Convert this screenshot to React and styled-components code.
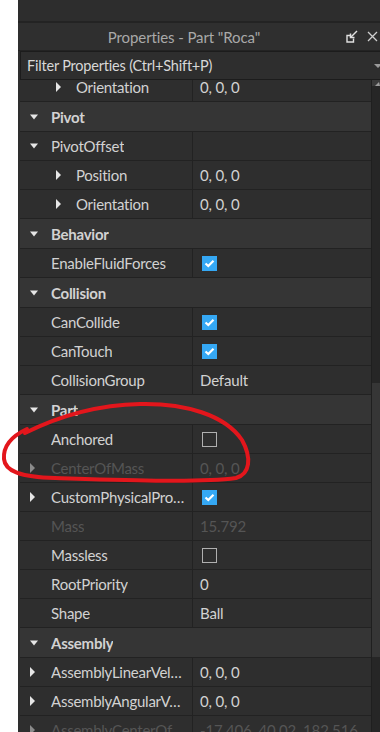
import React from 'react';
import styled, { createGlobalStyle } from 'styled-components';

const GlobalStyle = createGlobalStyle`
  html, body {
    margin: 0;
    padding: 0;
    background: #ffffff;
  }
  body {
    font-family: 'Lato', 'Liberation Sans', sans-serif;
  }
`;

const Screen = styled.div`
  position: relative;
  width: 380px;
  height: 732px;
  display: flex;
  overflow: hidden;
  background: #ffffff;
`;

const LeftGap = styled.div`
  width: 18px;
  flex-shrink: 0;
  background: #ffffff;
`;

const Panel = styled.div`
  flex: 1;
  display: flex;
  flex-direction: column;
  background: #2e2e2e;
  min-width: 0;
`;

const TopStrip = styled.div`
  height: 21px;
  background: #2d2d2d;
  border-bottom: 2px solid #232323;
  flex-shrink: 0;
`;

const TitleBar = styled.div`
  height: 27px;
  display: flex;
  align-items: center;
  background: #2f2f2f;
  border-bottom: 1px solid #232323;
  flex-shrink: 0;
`;

const Title = styled.div`
  flex: 1;
  text-align: center;
  padding-left: 4px;
  color: #a9a9a9;
  font-size: 15px;
  letter-spacing: -0.1px;
`;

const TitleIcons = styled.div`
  display: flex;
  align-items: center;
  gap: 9px;
  padding-right: 2px;
`;

const FilterBar = styled.div`
  height: 27px;
  margin-left: 2px;
  display: flex;
  align-items: center;
  justify-content: space-between;
  border: 1px solid #1c1c1c;
  border-right: none;
  background: #2e2e2e;
  padding-left: 6px;
  flex-shrink: 0;
`;

const FilterText = styled.span`
  color: #d8d8d8;
  font-size: 14.5px;
  letter-spacing: -0.2px;
`;

const DropArrow = styled.span`
  width: 0;
  height: 0;
  border-left: 4px solid transparent;
  border-right: 4px solid transparent;
  border-top: 4px solid #9a9a9a;
  margin-right: -2px;
`;

const Body = styled.div`
  flex: 1;
  display: flex;
  margin-left: 2px;
  min-height: 0;
`;

const List = styled.div`
  flex: 1;
  overflow: hidden;
  border-right: 1px solid #1f1f1f;
`;

const ListInner = styled.div`
  margin-top: -7px;
`;

const Scrollbar = styled.div`
  width: 8px;
  display: flex;
  flex-direction: column;
  background: #262626;
`;

const ScrollButton = styled.div`
  height: 16px;
  background: #3a3a3a;
  display: flex;
  align-items: flex-start;
  justify-content: flex-end;
  padding-top: 2px;
  box-sizing: border-box;
`;

const UpArrow = styled.span`
  width: 0;
  height: 0;
  border-left: 4px solid transparent;
  border-right: 1px solid transparent;
  border-bottom: 4px solid #9c9c9c;
`;

const Track = styled.div`
  height: ${(p) => p.$h}px;
  flex-shrink: 0;
  background: ${(p) => (p.$thumb ? '#363636' : '#262626')};
`;

const Row = styled.div`
  height: ${(p) => (p.$header ? 29 : 28)}px;
  display: flex;
  align-items: stretch;
  border-bottom: 1px solid #222222;
  background: ${(p) => (p.$header ? '#353535' : '#2e2e2e')};
`;

const NameCell = styled.div`
  width: 173px;
  flex-shrink: 0;
  display: flex;
  align-items: center;
  position: relative;
  padding-left: ${(p) => 31 + p.$indent * 25}px;
  padding-right: 7px;
  box-sizing: border-box;
  border-right: ${(p) => (p.$header ? 'none' : '1px solid #222222')};
  color: ${(p) => (p.$disabled ? '#555555' : '#d2d2d2')};
  font-size: 15px;
  font-weight: ${(p) => (p.$header ? 700 : 400)};
  letter-spacing: -0.25px;
  white-space: nowrap;
`;

const NameText = styled.span`
  overflow: hidden;
  text-overflow: ellipsis;
`;

const ValueCell = styled.div`
  flex: 1;
  display: flex;
  align-items: center;
  padding-left: 7px;
  color: ${(p) => (p.$disabled ? '#555555' : '#d2d2d2')};
  font-size: 15px;
  letter-spacing: -0.15px;
  white-space: nowrap;
`;

const Caret = styled.span`
  position: absolute;
  left: ${(p) => 10 + p.$indent * 26}px;
  top: 50%;
  width: 0;
  height: 0;
  transform: translateY(-50%);
  ${(p) =>
    p.$open
      ? `border-left: 4px solid transparent;
         border-right: 4px solid transparent;
         border-top: 5px solid #e6e6e6;`
      : `border-top: 5px solid transparent;
         border-bottom: 5px solid transparent;
         border-left: 5px solid ${p.$dim ? '#8a8a8a' : '#e6e6e6'};`}
`;

const Checkbox = styled.span`
  width: 15px;
  height: 15px;
  margin-left: 2px;
  box-sizing: border-box;
  display: flex;
  align-items: center;
  justify-content: center;
  background: ${(p) => (p.$checked ? '#35a8f4' : 'transparent')};
  border: ${(p) => (p.$checked ? 'none' : '1px solid #b0b0b0')};
`;

const Annotation = styled.svg`
  position: absolute;
  left: 0;
  top: 0;
  pointer-events: none;
`;

const rows = [
  { name: 'Orientation', indent: 1, caret: 'right', value: '0, 0, 0' },
  { header: true, name: 'Pivot' },
  { name: 'PivotOffset', caret: 'open', value: '' },
  { name: 'Position', indent: 1, caret: 'right', value: '0, 0, 0' },
  { name: 'Orientation', indent: 1, caret: 'right', value: '0, 0, 0' },
  { header: true, name: 'Behavior' },
  { name: 'EnableFluidForces', check: true },
  { header: true, name: 'Collision' },
  { name: 'CanCollide', check: true },
  { name: 'CanTouch', check: true },
  { name: 'CollisionGroup', value: 'Default' },
  { header: true, name: 'Part' },
  { name: 'Anchored', check: false },
  { name: 'CenterOfMass', caret: 'right', disabled: true, value: '0, 0, 0' },
  { name: 'CustomPhysicalProperties', caret: 'right', check: true },
  { name: 'Mass', disabled: true, value: '15.792' },
  { name: 'Massless', check: false },
  { name: 'RootPriority', value: '0' },
  { name: 'Shape', value: 'Ball' },
  { header: true, name: 'Assembly' },
  { name: 'AssemblyLinearVelocity', caret: 'right', value: '0, 0, 0' },
  { name: 'AssemblyAngularVelocity', caret: 'right', value: '0, 0, 0' },
  { name: 'AssemblyCenterOfMass', caret: 'right', disabled: true, value: '-17.406, 40.02, 182.516' },
];

const CheckMark = () => (
  <svg width="11" height="9" viewBox="0 0 11 9">
    <path d="M1.5 4.5 L4.3 7 L9.5 1.8" fill="none" stroke="#ffffff" strokeWidth="2.2" />
  </svg>
);

const UndockIcon = () => (
  <svg width="12" height="13" viewBox="0 0 12 13">
    <path d="M4.5 5.5 H1 V12 H7.5 V8.5" fill="none" stroke="#e0e0e0" strokeWidth="1.4" />
    <path d="M11 1 L5 7" stroke="#e0e0e0" strokeWidth="1.5" />
    <path d="M4.5 3.5 V7.5 H8.5" fill="none" stroke="#e0e0e0" strokeWidth="1.5" />
  </svg>
);

const CloseIcon = () => (
  <svg width="11" height="11" viewBox="0 0 11 11">
    <path d="M1 1 L10 10 M10 1 L1 10" stroke="#cfcfcf" strokeWidth="1.3" />
  </svg>
);

const PropRow = ({ row }) => {
  const indent = row.indent || 0;
  if (row.header) {
    return (
      <Row $header>
        <NameCell $header $indent={0}>
          <Caret $open $indent={0} />
          <NameText>{row.name}</NameText>
        </NameCell>
      </Row>
    );
  }
  return (
    <Row>
      <NameCell $indent={indent} $disabled={row.disabled}>
        {row.caret && (
          <Caret $open={row.caret === 'open'} $indent={indent} $dim={row.disabled} />
        )}
        <NameText>{row.name}</NameText>
      </NameCell>
      <ValueCell $disabled={row.disabled}>
        {row.check !== undefined ? (
          <Checkbox $checked={row.check}>{row.check && <CheckMark />}</Checkbox>
        ) : (
          row.value
        )}
      </ValueCell>
    </Row>
  );
};

export default function App() {
  return (
    <Screen>
      <GlobalStyle />
      <LeftGap />
      <Panel>
        <TopStrip />
        <TitleBar>
          <Title>Properties - Part "Roca"</Title>
          <TitleIcons>
            <UndockIcon />
            <CloseIcon />
          </TitleIcons>
        </TitleBar>
        <FilterBar>
          <FilterText>Filter Properties (Ctrl+Shift+P)</FilterText>
          <DropArrow />
        </FilterBar>
        <Body>
          <List>
            <ListInner>
              {rows.map((row, i) => (
                <PropRow key={i} row={row} />
              ))}
            </ListInner>
          </List>
          <Scrollbar>
            <ScrollButton>
              <UpArrow />
            </ScrollButton>
            <Track $h={297} />
            <Track $thumb $h={274} />
            <Track $h={80} />
          </Scrollbar>
        </Body>
      </Panel>
      <Annotation width="380" height="732" viewBox="0 0 380 732">
        <path
          d="M25 433 C 55 418, 95 405, 140 404 C 185 403, 225 415, 242 440 C 252 458, 250 474, 236 478 C 200 483, 120 480, 55 478 C 20 477, 5 471, 4 459 C 3 446, 12 436, 27 429"
          fill="none"
          stroke="#e3161c"
          strokeWidth="4"
          strokeLinecap="round"
          strokeLinejoin="round"
        />
      </Annotation>
    </Screen>
  );
}
